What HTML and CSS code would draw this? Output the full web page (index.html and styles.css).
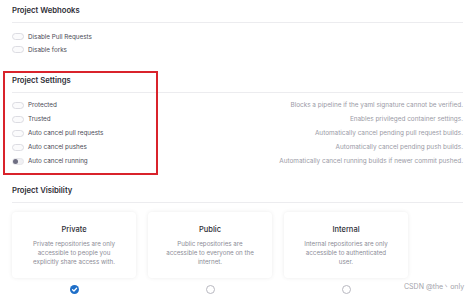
FILE: index.html
```html
<!DOCTYPE html>
<html lang="en">
<head>
<meta charset="utf-8">
<title>Project settings</title>
<link rel="stylesheet" href="styles.css">
</head>
<body>
<div class="page">
	<div class="section">
		<h2 class="title">Project Webhooks</h2>
		<div class="rows">
			<div class="row"><span class="toggle"></span><span class="label">Disable Pull Requests</span></div>
			<div class="row"><span class="toggle"></span><span class="label">Disable forks</span></div>
		</div>
	</div>

	<div class="section">
		<h2 class="title">Project Settings</h2>
		<div class="rows settings">
			<div class="row"><span class="toggle"></span><span class="label">Protected</span><span class="desc">Blocks a pipeline if the yaml signature cannot be verified.</span></div>
			<div class="row"><span class="toggle"></span><span class="label">Trusted</span><span class="desc">Enables privileged container settings.</span></div>
			<div class="row"><span class="toggle"></span><span class="label">Auto cancel pull requests</span><span class="desc">Automatically cancel pending pull request builds.</span></div>
			<div class="row"><span class="toggle"></span><span class="label">Auto cancel pushes</span><span class="desc">Automatically cancel pending push builds.</span></div>
			<div class="row"><span class="toggle on"></span><span class="label">Auto cancel running</span><span class="desc">Automatically cancel running builds if newer commit pushed.</span></div>
		</div>
	</div>

	<div class="section">
		<h2 class="title">Project Visibility</h2>
		<div class="cards">
			<div class="option">
				<div class="card">
					<div class="card-title">Private</div>
					<div class="card-text">Private repositories are only accessible to people you explicitly share access with.</div>
				</div>
				<span class="radio checked">
					<svg width="9" height="9" viewBox="0 0 10 10"><circle cx="5" cy="5" r="5" fill="#1f6fc8"/><path d="M2.8 5.2 L4.4 6.7 L7.3 3.6" fill="none" stroke="#fff" stroke-width="1.4" stroke-linecap="round" stroke-linejoin="round"/></svg>
				</span>
			</div>
			<div class="option">
				<div class="card">
					<div class="card-title">Public</div>
					<div class="card-text">Public repositories are accessible to everyone on the internet.</div>
				</div>
				<span class="radio"></span>
			</div>
			<div class="option">
				<div class="card">
					<div class="card-title">Internal</div>
					<div class="card-text">Internal repositories are only accessible to authenticated user.</div>
				</div>
				<span class="radio"></span>
			</div>
		</div>
	</div>
</div>
<div class="mark"></div>
<div class="watermark">CSDN @the丶only</div>
</body>
</html>
```

FILE: styles.css
```css
body {
	margin: 0;
	background: #fff;
	font-family: Inter, "Noto Sans", sans-serif;
	color: #2d2d35;
}
.page {
	padding: 0 11px 0 12px;
}
.section {
	padding-bottom: 14px;
}
.section:nth-child(2) {
	padding-bottom: 12px;
}
.section:nth-child(3) {
	padding-bottom: 0;
}
.title {
	margin: 0;
	padding-top: 5px;
	height: 17px;
	line-height: 12px;
	font-size: 7.7px;
	font-weight: 600;
	border-bottom: 1px solid #ececef;
}
.rows {
	padding-top: 7px;
}
.row {
	display: flex;
	align-items: center;
	height: 13px;
	font-size: 6.3px;
}
.settings {
	padding-top: 5px;
}
.settings .row {
	height: 14px;
}
.toggle {
	box-sizing: border-box;
	width: 12px;
	height: 7px;
	border: 1px solid #dcdce2;
	border-radius: 4px;
	margin-right: 4px;
	background: #fbfbfc;
}
.toggle.on {
	position: relative;
	border-color: #e6e6ea;
	background: #f0f0f3;
}
.toggle.on:after {
	content: "";
	position: absolute;
	left: 0px;
	top: 0px;
	width: 5px;
	height: 5px;
	border-radius: 50%;
	background: #6e6e82;
}
.label {
	color: #4a4a55;
}
.desc {
	margin-left: auto;
	font-size: 6.4px;
	color: #9a9aa6;
}
.cards {
	display: flex;
	gap: 12px;
	padding-top: 9px;
}
.option {
	width: 124px;
	display: flex;
	flex-direction: column;
	align-items: center;
}
.card {
	box-sizing: border-box;
	width: 100%;
	height: 66px;
	border-radius: 4px;
	background: #fff;
	box-shadow: 0 0 4px rgba(0, 0, 0, 0.08);
	text-align: center;
	padding: 13px 14px 0;
}
.card-title {
	font-size: 7.5px;
	line-height: 10px;
	font-weight: 500;
	color: #2d2d35;
	margin-bottom: 4px;
}
.card-text {
	font-size: 6.2px;
	line-height: 9px;
	color: #8b8b96;
}
.radio {
	box-sizing: border-box;
	margin-top: 7px;
	width: 9px;
	height: 9px;
	border-radius: 50%;
	border: 1px solid #b8b8c0;
}
.radio.checked {
	border: 0;
}
.radio svg {
	display: block;
}
.mark {
	position: absolute;
	left: 3px;
	top: 71px;
	width: 151px;
	height: 100px;
	border: 2px solid #d9232b;
}
.watermark {
	position: absolute;
	left: 404px;
	top: 282px;
	font-size: 7px;
	color: #a3a3ab;
}
```
